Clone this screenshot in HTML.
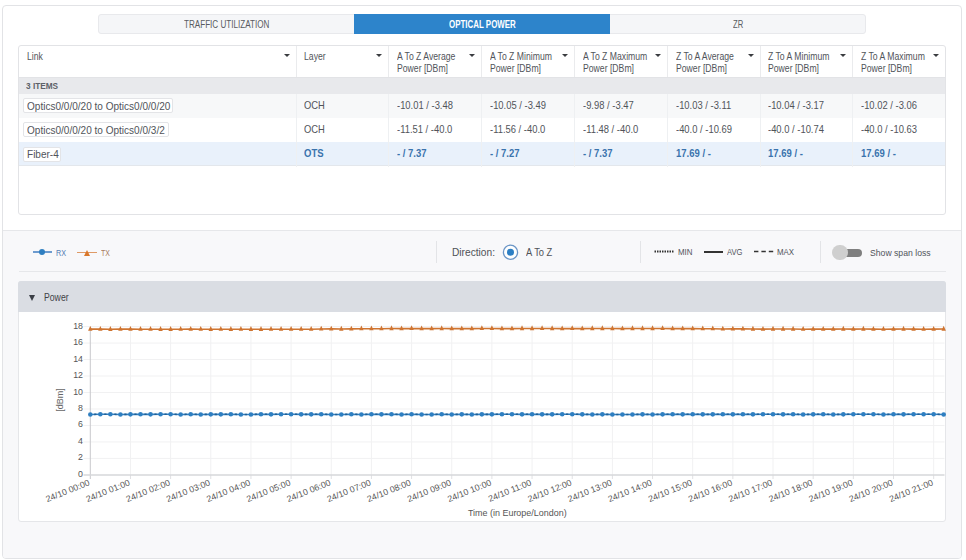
<!DOCTYPE html>
<html><head><meta charset="utf-8"><style>
*{box-sizing:border-box}
html,body{margin:0;padding:0;width:966px;height:560px;overflow:hidden;background:#fff;font-family:"Liberation Sans",sans-serif;color:#4d4f53}
.t{position:absolute;line-height:20px;white-space:nowrap;transform-origin:0 50%}
.b{position:absolute}
</style></head><body>
<div class="b" style="left:2px;top:5px;width:960px;height:554px;border:1px solid #e2e3e6;border-radius:4px;background:#fff"></div>
<div class="b" style="left:3px;top:230px;width:958px;height:328px;background:#f8f8fa;border-top:1px solid #e6e7ea;border-radius:0 0 3px 3px"></div>
<div class="b" style="left:98px;top:14px;width:768px;height:20px;background:#f5f6f8;border:1px solid #e8e9ec;border-radius:3px"></div>
<div class="b" style="left:354px;top:14px;width:255.5px;height:20px;background:#2d84cb"></div>
<div class="t" style="left:183.60px;top:15px;font-size:10px;color:#585b60;transform:scaleX(0.810);">TRAFFIC UTILIZATION</div>
<div class="t" style="left:448.70px;top:15px;font-size:10px;font-weight:bold;color:#fff;transform:scaleX(0.793);">OPTICAL POWER</div>
<div class="t" style="left:732.50px;top:15px;font-size:10px;color:#585b60;transform:scaleX(0.765);">ZR</div>
<div class="b" style="left:18px;top:45px;width:928px;height:170px;border:1px solid #e2e3e6;border-radius:3px;background:#fff"></div>
<div class="b" style="left:19px;top:77px;width:926px;height:16.5px;background:#e8e9ec"></div>
<div class="b" style="left:19px;top:93.5px;width:926px;height:24.2px;background:#f7f8f9"></div>
<div class="b" style="left:19px;top:142.1px;width:926px;height:24.4px;background:#e9f1fb"></div>
<div class="b" style="left:19px;top:165px;width:926px;height:1px;background:#e3e7ec"></div>
<div class="b" style="left:19px;top:76.5px;width:926px;height:1px;background:#e2e3e6"></div>
<div class="b" style="left:295.5px;top:46px;width:1px;height:31px;background:#eaebed"></div>
<div class="b" style="left:295.5px;top:93.5px;width:1px;height:73px;background:#eef0f2"></div>
<div class="b" style="left:388.0px;top:46px;width:1px;height:31px;background:#eaebed"></div>
<div class="b" style="left:388.0px;top:93.5px;width:1px;height:73px;background:#eef0f2"></div>
<div class="b" style="left:481.0px;top:46px;width:1px;height:31px;background:#eaebed"></div>
<div class="b" style="left:481.0px;top:93.5px;width:1px;height:73px;background:#eef0f2"></div>
<div class="b" style="left:574.0px;top:46px;width:1px;height:31px;background:#eaebed"></div>
<div class="b" style="left:574.0px;top:93.5px;width:1px;height:73px;background:#eef0f2"></div>
<div class="b" style="left:667.0px;top:46px;width:1px;height:31px;background:#eaebed"></div>
<div class="b" style="left:667.0px;top:93.5px;width:1px;height:73px;background:#eef0f2"></div>
<div class="b" style="left:759.5px;top:46px;width:1px;height:31px;background:#eaebed"></div>
<div class="b" style="left:759.5px;top:93.5px;width:1px;height:73px;background:#eef0f2"></div>
<div class="b" style="left:852.0px;top:46px;width:1px;height:31px;background:#eaebed"></div>
<div class="b" style="left:852.0px;top:93.5px;width:1px;height:73px;background:#eef0f2"></div>
<div class="t" style="left:26.70px;top:47px;font-size:10.2px;color:#51545a;transform:scaleX(0.850);">Link</div>
<div class="b" style="left:283.9px;top:54.2px;width:0;height:0;border-left:3px solid transparent;border-right:3px solid transparent;border-top:3px solid #3a3c40"></div>
<div class="t" style="left:304.20px;top:47px;font-size:10.2px;color:#51545a;transform:scaleX(0.850);">Layer</div>
<div class="b" style="left:376.4px;top:54.2px;width:0;height:0;border-left:3px solid transparent;border-right:3px solid transparent;border-top:3px solid #3a3c40"></div>
<div class="t" style="left:396.70px;top:47px;font-size:10.2px;color:#51545a;transform:scaleX(0.850);">A To Z Average</div>
<div class="t" style="left:396.70px;top:59px;font-size:10.2px;color:#51545a;transform:scaleX(0.850);">Power [DBm]</div>
<div class="b" style="left:469.4px;top:54.2px;width:0;height:0;border-left:3px solid transparent;border-right:3px solid transparent;border-top:3px solid #3a3c40"></div>
<div class="t" style="left:489.70px;top:47px;font-size:10.2px;color:#51545a;transform:scaleX(0.850);">A To Z Minimum</div>
<div class="t" style="left:489.70px;top:59px;font-size:10.2px;color:#51545a;transform:scaleX(0.850);">Power [DBm]</div>
<div class="b" style="left:562.4px;top:54.2px;width:0;height:0;border-left:3px solid transparent;border-right:3px solid transparent;border-top:3px solid #3a3c40"></div>
<div class="t" style="left:582.70px;top:47px;font-size:10.2px;color:#51545a;transform:scaleX(0.850);">A To Z Maximum</div>
<div class="t" style="left:582.70px;top:59px;font-size:10.2px;color:#51545a;transform:scaleX(0.850);">Power [DBm]</div>
<div class="b" style="left:655.4px;top:54.2px;width:0;height:0;border-left:3px solid transparent;border-right:3px solid transparent;border-top:3px solid #3a3c40"></div>
<div class="t" style="left:675.70px;top:47px;font-size:10.2px;color:#51545a;transform:scaleX(0.850);">Z To A Average</div>
<div class="t" style="left:675.70px;top:59px;font-size:10.2px;color:#51545a;transform:scaleX(0.850);">Power [DBm]</div>
<div class="b" style="left:747.9px;top:54.2px;width:0;height:0;border-left:3px solid transparent;border-right:3px solid transparent;border-top:3px solid #3a3c40"></div>
<div class="t" style="left:768.20px;top:47px;font-size:10.2px;color:#51545a;transform:scaleX(0.850);">Z To A Minimum</div>
<div class="t" style="left:768.20px;top:59px;font-size:10.2px;color:#51545a;transform:scaleX(0.850);">Power [DBm]</div>
<div class="b" style="left:840.4px;top:54.2px;width:0;height:0;border-left:3px solid transparent;border-right:3px solid transparent;border-top:3px solid #3a3c40"></div>
<div class="t" style="left:860.70px;top:47px;font-size:10.2px;color:#51545a;transform:scaleX(0.850);">Z To A Maximum</div>
<div class="t" style="left:860.70px;top:59px;font-size:10.2px;color:#51545a;transform:scaleX(0.850);">Power [DBm]</div>
<div class="b" style="left:933.4px;top:54.2px;width:0;height:0;border-left:3px solid transparent;border-right:3px solid transparent;border-top:3px solid #3a3c40"></div>
<div class="t" style="left:26.10px;top:76px;font-size:8.6px;font-weight:bold;color:#5d6168;transform:scaleX(0.960);">3 ITEMS</div>
<div class="b" style="left:23.4px;top:98.1px;width:150px;height:15.2px;border:1px solid #e3e4e7;border-radius:2px;background:#fff"></div>
<div class="t" style="left:26.70px;top:97px;font-size:10.4px;color:#51545a;transform:scaleX(0.966);">Optics0/0/0/20 to Optics0/0/0/20</div>
<div class="t" style="left:304.40px;top:96px;font-size:10.2px;color:#51545a;transform:scaleX(0.923);">OCH</div>
<div class="t" style="left:396.90px;top:96px;font-size:10.2px;color:#51545a;transform:scaleX(0.923);">-10.01 / -3.48</div>
<div class="t" style="left:489.90px;top:96px;font-size:10.2px;color:#51545a;transform:scaleX(0.923);">-10.05 / -3.49</div>
<div class="t" style="left:582.90px;top:96px;font-size:10.2px;color:#51545a;transform:scaleX(0.923);">-9.98 / -3.47</div>
<div class="t" style="left:675.90px;top:96px;font-size:10.2px;color:#51545a;transform:scaleX(0.923);">-10.03 / -3.11</div>
<div class="t" style="left:768.40px;top:96px;font-size:10.2px;color:#51545a;transform:scaleX(0.923);">-10.04 / -3.17</div>
<div class="t" style="left:860.90px;top:96px;font-size:10.2px;color:#51545a;transform:scaleX(0.923);">-10.02 / -3.06</div>
<div class="b" style="left:23.4px;top:122.3px;width:145.2px;height:15.2px;border:1px solid #e3e4e7;border-radius:2px;background:#fff"></div>
<div class="t" style="left:26.70px;top:121px;font-size:10.4px;color:#51545a;transform:scaleX(0.966);">Optics0/0/0/20 to Optics0/0/3/2</div>
<div class="t" style="left:304.40px;top:120px;font-size:10.2px;color:#51545a;transform:scaleX(0.923);">OCH</div>
<div class="t" style="left:396.90px;top:120px;font-size:10.2px;color:#51545a;transform:scaleX(0.923);">-11.51 / -40.0</div>
<div class="t" style="left:489.90px;top:120px;font-size:10.2px;color:#51545a;transform:scaleX(0.923);">-11.56 / -40.0</div>
<div class="t" style="left:582.90px;top:120px;font-size:10.2px;color:#51545a;transform:scaleX(0.923);">-11.48 / -40.0</div>
<div class="t" style="left:675.90px;top:120px;font-size:10.2px;color:#51545a;transform:scaleX(0.923);">-40.0 / -10.69</div>
<div class="t" style="left:768.40px;top:120px;font-size:10.2px;color:#51545a;transform:scaleX(0.923);">-40.0 / -10.74</div>
<div class="t" style="left:860.90px;top:120px;font-size:10.2px;color:#51545a;transform:scaleX(0.923);">-40.0 / -10.63</div>
<div class="b" style="left:23.4px;top:146.7px;width:37.7px;height:15.2px;border:1px solid #e3e4e7;border-radius:2px;background:#fff"></div>
<div class="t" style="left:26.70px;top:145px;font-size:10.4px;color:#51545a;transform:scaleX(0.966);">Fiber-4</div>
<div class="t" style="left:304.40px;top:144px;font-size:10px;font-weight:bold;color:#3a73ad;transform:scaleX(0.950);">OTS</div>
<div class="t" style="left:396.90px;top:144px;font-size:10px;font-weight:bold;color:#3a73ad;transform:scaleX(0.950);">- / 7.37</div>
<div class="t" style="left:489.90px;top:144px;font-size:10px;font-weight:bold;color:#3a73ad;transform:scaleX(0.950);">- / 7.27</div>
<div class="t" style="left:582.90px;top:144px;font-size:10px;font-weight:bold;color:#3a73ad;transform:scaleX(0.950);">- / 7.37</div>
<div class="t" style="left:675.90px;top:144px;font-size:10px;font-weight:bold;color:#3a73ad;transform:scaleX(0.950);">17.69 / -</div>
<div class="t" style="left:768.40px;top:144px;font-size:10px;font-weight:bold;color:#3a73ad;transform:scaleX(0.950);">17.69 / -</div>
<div class="t" style="left:860.90px;top:144px;font-size:10px;font-weight:bold;color:#3a73ad;transform:scaleX(0.950);">17.69 / -</div>
<div class="b" style="left:18.5px;top:271px;width:927px;height:1px;background:#e6e7ea"></div>
<div class="b" style="left:33px;top:251px;width:19px;height:2px;background:#6d9bcf"></div>
<div class="b" style="left:39.2px;top:249px;width:6.2px;height:6.2px;border-radius:50%;background:#2f7fc1"></div>
<div class="t" style="left:56.20px;top:243px;font-size:9px;color:#5580b5;transform:scaleX(0.808);">RX</div>
<div class="b" style="left:77px;top:251.5px;width:19.5px;height:1.5px;background:#df9a66"></div>
<div class="b" style="left:84px;top:249.5px;width:0;height:0;border-left:3.2px solid transparent;border-right:3.2px solid transparent;border-bottom:6px solid #d9772b"></div>
<div class="t" style="left:101.00px;top:243px;font-size:9px;color:#a87c60;transform:scaleX(0.774);">TX</div>
<div class="b" style="left:436px;top:241px;width:1px;height:22px;background:#e3e4e7"></div>
<div class="b" style="left:639.5px;top:241px;width:1px;height:22px;background:#e3e4e7"></div>
<div class="b" style="left:819.5px;top:241px;width:1px;height:22px;background:#e3e4e7"></div>
<div class="t" style="left:452.00px;top:242px;font-size:10.8px;color:#4f5257;transform:scaleX(0.943);">Direction:</div>
<svg class="b" style="left:500px;top:242px" width="22" height="22"><circle cx="10.5" cy="10.2" r="7.1" fill="#fff" stroke="#6b95c6" stroke-width="1.3"/><circle cx="10.5" cy="10.2" r="3.5" fill="#2d7fc4"/></svg>
<div class="t" style="left:525.60px;top:242px;font-size:10.5px;color:#4f5257;transform:scaleX(0.889);">A To Z</div>
<svg class="b" style="left:654px;top:250px" width="20" height="3"><line x1="0.5" x2="19.5" y1="1.5" y2="1.5" stroke="#333" stroke-width="1.8" stroke-dasharray="1.5 1"/></svg>
<div class="t" style="left:678.00px;top:242px;font-size:9px;color:#51545a;transform:scaleX(0.879);">MIN</div>
<div class="b" style="left:704px;top:251px;width:19px;height:2px;background:#333"></div>
<div class="t" style="left:726.70px;top:242px;font-size:9px;color:#51545a;transform:scaleX(0.845);">AVG</div>
<svg class="b" style="left:753.8px;top:250px" width="20" height="3"><line x1="0" x2="19.2" y1="1.5" y2="1.5" stroke="#333" stroke-width="1.6" stroke-dasharray="4.4 3"/></svg>
<div class="t" style="left:776.60px;top:242px;font-size:9px;color:#51545a;transform:scaleX(0.872);">MAX</div>
<div class="b" style="left:841px;top:248.6px;width:21px;height:8.2px;border-radius:4px;background:#7f7f7f"></div>
<div class="b" style="left:832.3px;top:245px;width:15.3px;height:15.3px;border-radius:50%;background:#cfcfcf"></div>
<div class="t" style="left:869.80px;top:243px;font-size:9.8px;color:#51545a;transform:scaleX(0.883);">Show span loss</div>
<div class="b" style="left:18px;top:281px;width:928px;height:241px;border:1px solid #e5e6e9;border-radius:3px;background:#fff"></div>
<div class="b" style="left:18px;top:281px;width:928px;height:31px;background:#dadde3;border-radius:3px 3px 0 0"></div>
<div class="b" style="left:29px;top:294.5px;width:0;height:0;border-left:3.8px solid transparent;border-right:3.8px solid transparent;border-top:6px solid #3a3e46"></div>
<div class="t" style="left:43.80px;top:288px;font-size:10px;color:#3f4247;transform:scaleX(0.868);">Power</div>
<svg class="b" style="left:0;top:0" width="966" height="560"><line x1="83.5" x2="944.5" y1="458.42" y2="458.42" stroke="#f1f1f2" stroke-width="1"/><line x1="83.5" x2="944.5" y1="441.94" y2="441.94" stroke="#f1f1f2" stroke-width="1"/><line x1="83.5" x2="944.5" y1="425.46" y2="425.46" stroke="#f1f1f2" stroke-width="1"/><line x1="83.5" x2="944.5" y1="408.98" y2="408.98" stroke="#f1f1f2" stroke-width="1"/><line x1="83.5" x2="944.5" y1="392.50" y2="392.50" stroke="#f1f1f2" stroke-width="1"/><line x1="83.5" x2="944.5" y1="376.02" y2="376.02" stroke="#f1f1f2" stroke-width="1"/><line x1="83.5" x2="944.5" y1="359.54" y2="359.54" stroke="#f1f1f2" stroke-width="1"/><line x1="83.5" x2="944.5" y1="343.06" y2="343.06" stroke="#f1f1f2" stroke-width="1"/><line x1="83.5" x2="944.5" y1="326.58" y2="326.58" stroke="#f1f1f2" stroke-width="1"/><line x1="130.46" x2="130.46" y1="326.58" y2="474.90" stroke="#f1f1f2" stroke-width="1"/><line x1="170.62" x2="170.62" y1="326.58" y2="474.90" stroke="#f1f1f2" stroke-width="1"/><line x1="210.78" x2="210.78" y1="326.58" y2="474.90" stroke="#f1f1f2" stroke-width="1"/><line x1="250.94" x2="250.94" y1="326.58" y2="474.90" stroke="#f1f1f2" stroke-width="1"/><line x1="291.10" x2="291.10" y1="326.58" y2="474.90" stroke="#f1f1f2" stroke-width="1"/><line x1="331.26" x2="331.26" y1="326.58" y2="474.90" stroke="#f1f1f2" stroke-width="1"/><line x1="371.42" x2="371.42" y1="326.58" y2="474.90" stroke="#f1f1f2" stroke-width="1"/><line x1="411.58" x2="411.58" y1="326.58" y2="474.90" stroke="#f1f1f2" stroke-width="1"/><line x1="451.74" x2="451.74" y1="326.58" y2="474.90" stroke="#f1f1f2" stroke-width="1"/><line x1="491.90" x2="491.90" y1="326.58" y2="474.90" stroke="#f1f1f2" stroke-width="1"/><line x1="532.06" x2="532.06" y1="326.58" y2="474.90" stroke="#f1f1f2" stroke-width="1"/><line x1="572.22" x2="572.22" y1="326.58" y2="474.90" stroke="#f1f1f2" stroke-width="1"/><line x1="612.38" x2="612.38" y1="326.58" y2="474.90" stroke="#f1f1f2" stroke-width="1"/><line x1="652.54" x2="652.54" y1="326.58" y2="474.90" stroke="#f1f1f2" stroke-width="1"/><line x1="692.70" x2="692.70" y1="326.58" y2="474.90" stroke="#f1f1f2" stroke-width="1"/><line x1="732.86" x2="732.86" y1="326.58" y2="474.90" stroke="#f1f1f2" stroke-width="1"/><line x1="773.02" x2="773.02" y1="326.58" y2="474.90" stroke="#f1f1f2" stroke-width="1"/><line x1="813.18" x2="813.18" y1="326.58" y2="474.90" stroke="#f1f1f2" stroke-width="1"/><line x1="853.34" x2="853.34" y1="326.58" y2="474.90" stroke="#f1f1f2" stroke-width="1"/><line x1="893.50" x2="893.50" y1="326.58" y2="474.90" stroke="#f1f1f2" stroke-width="1"/><line x1="933.66" x2="933.66" y1="326.58" y2="474.90" stroke="#f1f1f2" stroke-width="1"/><line x1="90.30" x2="90.30" y1="326.58" y2="479" stroke="#c8c8cc" stroke-width="1"/><line x1="130.46" x2="130.46" y1="474.90" y2="479" stroke="#e0e0e3" stroke-width="1"/><line x1="170.62" x2="170.62" y1="474.90" y2="479" stroke="#e0e0e3" stroke-width="1"/><line x1="210.78" x2="210.78" y1="474.90" y2="479" stroke="#e0e0e3" stroke-width="1"/><line x1="250.94" x2="250.94" y1="474.90" y2="479" stroke="#e0e0e3" stroke-width="1"/><line x1="291.10" x2="291.10" y1="474.90" y2="479" stroke="#e0e0e3" stroke-width="1"/><line x1="331.26" x2="331.26" y1="474.90" y2="479" stroke="#e0e0e3" stroke-width="1"/><line x1="371.42" x2="371.42" y1="474.90" y2="479" stroke="#e0e0e3" stroke-width="1"/><line x1="411.58" x2="411.58" y1="474.90" y2="479" stroke="#e0e0e3" stroke-width="1"/><line x1="451.74" x2="451.74" y1="474.90" y2="479" stroke="#e0e0e3" stroke-width="1"/><line x1="491.90" x2="491.90" y1="474.90" y2="479" stroke="#e0e0e3" stroke-width="1"/><line x1="532.06" x2="532.06" y1="474.90" y2="479" stroke="#e0e0e3" stroke-width="1"/><line x1="572.22" x2="572.22" y1="474.90" y2="479" stroke="#e0e0e3" stroke-width="1"/><line x1="612.38" x2="612.38" y1="474.90" y2="479" stroke="#e0e0e3" stroke-width="1"/><line x1="652.54" x2="652.54" y1="474.90" y2="479" stroke="#e0e0e3" stroke-width="1"/><line x1="692.70" x2="692.70" y1="474.90" y2="479" stroke="#e0e0e3" stroke-width="1"/><line x1="732.86" x2="732.86" y1="474.90" y2="479" stroke="#e0e0e3" stroke-width="1"/><line x1="773.02" x2="773.02" y1="474.90" y2="479" stroke="#e0e0e3" stroke-width="1"/><line x1="813.18" x2="813.18" y1="474.90" y2="479" stroke="#e0e0e3" stroke-width="1"/><line x1="853.34" x2="853.34" y1="474.90" y2="479" stroke="#e0e0e3" stroke-width="1"/><line x1="893.50" x2="893.50" y1="474.90" y2="479" stroke="#e0e0e3" stroke-width="1"/><line x1="933.66" x2="933.66" y1="474.90" y2="479" stroke="#e0e0e3" stroke-width="1"/><line x1="83.5" x2="944.5" y1="474.90" y2="474.90" stroke="#d6d7da" stroke-width="1.5"/><text x="83" y="476.90" text-anchor="end" font-family="Liberation Sans" font-size="8.8" fill="#555">0</text><text x="83" y="460.42" text-anchor="end" font-family="Liberation Sans" font-size="8.8" fill="#555">2</text><text x="83" y="443.94" text-anchor="end" font-family="Liberation Sans" font-size="8.8" fill="#555">4</text><text x="83" y="427.46" text-anchor="end" font-family="Liberation Sans" font-size="8.8" fill="#555">6</text><text x="83" y="410.98" text-anchor="end" font-family="Liberation Sans" font-size="8.8" fill="#555">8</text><text x="83" y="394.50" text-anchor="end" font-family="Liberation Sans" font-size="8.8" fill="#555">10</text><text x="83" y="378.02" text-anchor="end" font-family="Liberation Sans" font-size="8.8" fill="#555">12</text><text x="83" y="361.54" text-anchor="end" font-family="Liberation Sans" font-size="8.8" fill="#555">14</text><text x="83" y="345.06" text-anchor="end" font-family="Liberation Sans" font-size="8.8" fill="#555">16</text><text x="83" y="328.58" text-anchor="end" font-family="Liberation Sans" font-size="8.8" fill="#555">18</text><text x="90.40" y="484.80" text-anchor="end" transform="rotate(-22 90.40 484.80)" font-family="Liberation Sans" font-size="8.8" fill="#555">24/10 00:00</text><text x="130.56" y="484.80" text-anchor="end" transform="rotate(-22 130.56 484.80)" font-family="Liberation Sans" font-size="8.8" fill="#555">24/10 01:00</text><text x="170.72" y="484.80" text-anchor="end" transform="rotate(-22 170.72 484.80)" font-family="Liberation Sans" font-size="8.8" fill="#555">24/10 02:00</text><text x="210.88" y="484.80" text-anchor="end" transform="rotate(-22 210.88 484.80)" font-family="Liberation Sans" font-size="8.8" fill="#555">24/10 03:00</text><text x="251.04" y="484.80" text-anchor="end" transform="rotate(-22 251.04 484.80)" font-family="Liberation Sans" font-size="8.8" fill="#555">24/10 04:00</text><text x="291.20" y="484.80" text-anchor="end" transform="rotate(-22 291.20 484.80)" font-family="Liberation Sans" font-size="8.8" fill="#555">24/10 05:00</text><text x="331.36" y="484.80" text-anchor="end" transform="rotate(-22 331.36 484.80)" font-family="Liberation Sans" font-size="8.8" fill="#555">24/10 06:00</text><text x="371.52" y="484.80" text-anchor="end" transform="rotate(-22 371.52 484.80)" font-family="Liberation Sans" font-size="8.8" fill="#555">24/10 07:00</text><text x="411.68" y="484.80" text-anchor="end" transform="rotate(-22 411.68 484.80)" font-family="Liberation Sans" font-size="8.8" fill="#555">24/10 08:00</text><text x="451.84" y="484.80" text-anchor="end" transform="rotate(-22 451.84 484.80)" font-family="Liberation Sans" font-size="8.8" fill="#555">24/10 09:00</text><text x="492.00" y="484.80" text-anchor="end" transform="rotate(-22 492.00 484.80)" font-family="Liberation Sans" font-size="8.8" fill="#555">24/10 10:00</text><text x="532.16" y="484.80" text-anchor="end" transform="rotate(-22 532.16 484.80)" font-family="Liberation Sans" font-size="8.8" fill="#555">24/10 11:00</text><text x="572.32" y="484.80" text-anchor="end" transform="rotate(-22 572.32 484.80)" font-family="Liberation Sans" font-size="8.8" fill="#555">24/10 12:00</text><text x="612.48" y="484.80" text-anchor="end" transform="rotate(-22 612.48 484.80)" font-family="Liberation Sans" font-size="8.8" fill="#555">24/10 13:00</text><text x="652.64" y="484.80" text-anchor="end" transform="rotate(-22 652.64 484.80)" font-family="Liberation Sans" font-size="8.8" fill="#555">24/10 14:00</text><text x="692.80" y="484.80" text-anchor="end" transform="rotate(-22 692.80 484.80)" font-family="Liberation Sans" font-size="8.8" fill="#555">24/10 15:00</text><text x="732.96" y="484.80" text-anchor="end" transform="rotate(-22 732.96 484.80)" font-family="Liberation Sans" font-size="8.8" fill="#555">24/10 16:00</text><text x="773.12" y="484.80" text-anchor="end" transform="rotate(-22 773.12 484.80)" font-family="Liberation Sans" font-size="8.8" fill="#555">24/10 17:00</text><text x="813.28" y="484.80" text-anchor="end" transform="rotate(-22 813.28 484.80)" font-family="Liberation Sans" font-size="8.8" fill="#555">24/10 18:00</text><text x="853.44" y="484.80" text-anchor="end" transform="rotate(-22 853.44 484.80)" font-family="Liberation Sans" font-size="8.8" fill="#555">24/10 19:00</text><text x="893.60" y="484.80" text-anchor="end" transform="rotate(-22 893.60 484.80)" font-family="Liberation Sans" font-size="8.8" fill="#555">24/10 20:00</text><text x="933.76" y="484.80" text-anchor="end" transform="rotate(-22 933.76 484.80)" font-family="Liberation Sans" font-size="8.8" fill="#555">24/10 21:00</text><text x="0" y="0" text-anchor="middle" transform="translate(62.6 400) rotate(-90)" font-family="Liberation Sans" font-size="9" fill="#666">[dBm]</text><text x="517.3" y="515.8" text-anchor="middle" font-family="Liberation Sans" font-size="8.96" fill="#555">Time (in Europe/London)</text><polyline points="90.30,329.12 100.34,329.12 110.38,329.32 120.42,329.12 130.46,329.12 140.50,329.22 150.54,329.22 160.58,329.32 170.62,329.32 180.66,329.22 190.70,329.12 200.74,329.22 210.78,329.32 220.82,329.22 230.86,329.32 240.90,329.22 250.94,329.32 260.98,329.32 271.02,329.22 281.06,329.22 291.10,329.22 301.14,329.26 311.18,329.21 321.22,328.95 331.26,328.90 341.30,329.04 351.34,328.89 361.38,328.73 371.42,328.68 381.46,328.72 391.50,328.57 401.54,328.61 411.58,328.46 421.62,328.66 431.66,328.66 441.70,328.56 451.74,328.66 461.78,328.66 471.82,328.66 481.86,328.46 491.90,328.46 501.94,328.66 511.98,328.66 522.02,328.56 532.06,328.56 542.10,328.46 552.14,328.56 562.18,328.66 572.22,328.46 582.26,328.66 592.30,328.56 602.34,328.56 612.38,328.56 622.42,328.66 632.46,328.56 642.50,328.56 652.54,328.56 662.58,328.51 672.62,328.65 682.66,328.60 692.70,328.65 702.74,328.70 712.78,328.75 722.82,328.99 732.86,328.84 742.90,328.89 752.94,329.04 762.98,329.09 773.02,329.04 783.06,329.04 793.10,329.04 803.14,329.23 813.18,329.13 823.22,329.13 833.26,329.13 843.30,329.04 853.34,329.13 863.38,329.04 873.42,329.13 883.46,329.23 893.50,329.13 903.54,329.04 913.58,329.13 923.62,329.23 933.66,329.13 943.70,329.04" fill="none" stroke="#cf7430" stroke-width="1.6"/><path d="M90.30 325.92L92.50 330.72L88.10 330.72Z" fill="#cf7430"/><path d="M100.34 325.92L102.54 330.72L98.14 330.72Z" fill="#cf7430"/><path d="M110.38 326.12L112.58 330.92L108.18 330.92Z" fill="#cf7430"/><path d="M120.42 325.92L122.62 330.72L118.22 330.72Z" fill="#cf7430"/><path d="M130.46 325.92L132.66 330.72L128.26 330.72Z" fill="#cf7430"/><path d="M140.50 326.02L142.70 330.82L138.30 330.82Z" fill="#cf7430"/><path d="M150.54 326.02L152.74 330.82L148.34 330.82Z" fill="#cf7430"/><path d="M160.58 326.12L162.78 330.92L158.38 330.92Z" fill="#cf7430"/><path d="M170.62 326.12L172.82 330.92L168.42 330.92Z" fill="#cf7430"/><path d="M180.66 326.02L182.86 330.82L178.46 330.82Z" fill="#cf7430"/><path d="M190.70 325.92L192.90 330.72L188.50 330.72Z" fill="#cf7430"/><path d="M200.74 326.02L202.94 330.82L198.54 330.82Z" fill="#cf7430"/><path d="M210.78 326.12L212.98 330.92L208.58 330.92Z" fill="#cf7430"/><path d="M220.82 326.02L223.02 330.82L218.62 330.82Z" fill="#cf7430"/><path d="M230.86 326.12L233.06 330.92L228.66 330.92Z" fill="#cf7430"/><path d="M240.90 326.02L243.10 330.82L238.70 330.82Z" fill="#cf7430"/><path d="M250.94 326.12L253.14 330.92L248.74 330.92Z" fill="#cf7430"/><path d="M260.98 326.12L263.18 330.92L258.78 330.92Z" fill="#cf7430"/><path d="M271.02 326.02L273.22 330.82L268.82 330.82Z" fill="#cf7430"/><path d="M281.06 326.02L283.26 330.82L278.86 330.82Z" fill="#cf7430"/><path d="M291.10 326.02L293.30 330.82L288.90 330.82Z" fill="#cf7430"/><path d="M301.14 326.06L303.34 330.86L298.94 330.86Z" fill="#cf7430"/><path d="M311.18 326.01L313.38 330.81L308.98 330.81Z" fill="#cf7430"/><path d="M321.22 325.75L323.42 330.55L319.02 330.55Z" fill="#cf7430"/><path d="M331.26 325.70L333.46 330.50L329.06 330.50Z" fill="#cf7430"/><path d="M341.30 325.84L343.50 330.64L339.10 330.64Z" fill="#cf7430"/><path d="M351.34 325.69L353.54 330.49L349.14 330.49Z" fill="#cf7430"/><path d="M361.38 325.53L363.58 330.33L359.18 330.33Z" fill="#cf7430"/><path d="M371.42 325.48L373.62 330.28L369.22 330.28Z" fill="#cf7430"/><path d="M381.46 325.52L383.66 330.32L379.26 330.32Z" fill="#cf7430"/><path d="M391.50 325.37L393.70 330.17L389.30 330.17Z" fill="#cf7430"/><path d="M401.54 325.41L403.74 330.21L399.34 330.21Z" fill="#cf7430"/><path d="M411.58 325.26L413.78 330.06L409.38 330.06Z" fill="#cf7430"/><path d="M421.62 325.46L423.82 330.26L419.42 330.26Z" fill="#cf7430"/><path d="M431.66 325.46L433.86 330.26L429.46 330.26Z" fill="#cf7430"/><path d="M441.70 325.36L443.90 330.16L439.50 330.16Z" fill="#cf7430"/><path d="M451.74 325.46L453.94 330.26L449.54 330.26Z" fill="#cf7430"/><path d="M461.78 325.46L463.98 330.26L459.58 330.26Z" fill="#cf7430"/><path d="M471.82 325.46L474.02 330.26L469.62 330.26Z" fill="#cf7430"/><path d="M481.86 325.26L484.06 330.06L479.66 330.06Z" fill="#cf7430"/><path d="M491.90 325.26L494.10 330.06L489.70 330.06Z" fill="#cf7430"/><path d="M501.94 325.46L504.14 330.26L499.74 330.26Z" fill="#cf7430"/><path d="M511.98 325.46L514.18 330.26L509.78 330.26Z" fill="#cf7430"/><path d="M522.02 325.36L524.22 330.16L519.82 330.16Z" fill="#cf7430"/><path d="M532.06 325.36L534.26 330.16L529.86 330.16Z" fill="#cf7430"/><path d="M542.10 325.26L544.30 330.06L539.90 330.06Z" fill="#cf7430"/><path d="M552.14 325.36L554.34 330.16L549.94 330.16Z" fill="#cf7430"/><path d="M562.18 325.46L564.38 330.26L559.98 330.26Z" fill="#cf7430"/><path d="M572.22 325.26L574.42 330.06L570.02 330.06Z" fill="#cf7430"/><path d="M582.26 325.46L584.46 330.26L580.06 330.26Z" fill="#cf7430"/><path d="M592.30 325.36L594.50 330.16L590.10 330.16Z" fill="#cf7430"/><path d="M602.34 325.36L604.54 330.16L600.14 330.16Z" fill="#cf7430"/><path d="M612.38 325.36L614.58 330.16L610.18 330.16Z" fill="#cf7430"/><path d="M622.42 325.46L624.62 330.26L620.22 330.26Z" fill="#cf7430"/><path d="M632.46 325.36L634.66 330.16L630.26 330.16Z" fill="#cf7430"/><path d="M642.50 325.36L644.70 330.16L640.30 330.16Z" fill="#cf7430"/><path d="M652.54 325.36L654.74 330.16L650.34 330.16Z" fill="#cf7430"/><path d="M662.58 325.31L664.78 330.11L660.38 330.11Z" fill="#cf7430"/><path d="M672.62 325.45L674.82 330.25L670.42 330.25Z" fill="#cf7430"/><path d="M682.66 325.40L684.86 330.20L680.46 330.20Z" fill="#cf7430"/><path d="M692.70 325.45L694.90 330.25L690.50 330.25Z" fill="#cf7430"/><path d="M702.74 325.50L704.94 330.30L700.54 330.30Z" fill="#cf7430"/><path d="M712.78 325.55L714.98 330.35L710.58 330.35Z" fill="#cf7430"/><path d="M722.82 325.79L725.02 330.59L720.62 330.59Z" fill="#cf7430"/><path d="M732.86 325.64L735.06 330.44L730.66 330.44Z" fill="#cf7430"/><path d="M742.90 325.69L745.10 330.49L740.70 330.49Z" fill="#cf7430"/><path d="M752.94 325.84L755.14 330.64L750.74 330.64Z" fill="#cf7430"/><path d="M762.98 325.89L765.18 330.69L760.78 330.69Z" fill="#cf7430"/><path d="M773.02 325.84L775.22 330.64L770.82 330.64Z" fill="#cf7430"/><path d="M783.06 325.84L785.26 330.64L780.86 330.64Z" fill="#cf7430"/><path d="M793.10 325.84L795.30 330.64L790.90 330.64Z" fill="#cf7430"/><path d="M803.14 326.03L805.34 330.83L800.94 330.83Z" fill="#cf7430"/><path d="M813.18 325.93L815.38 330.73L810.98 330.73Z" fill="#cf7430"/><path d="M823.22 325.93L825.42 330.73L821.02 330.73Z" fill="#cf7430"/><path d="M833.26 325.93L835.46 330.73L831.06 330.73Z" fill="#cf7430"/><path d="M843.30 325.84L845.50 330.64L841.10 330.64Z" fill="#cf7430"/><path d="M853.34 325.93L855.54 330.73L851.14 330.73Z" fill="#cf7430"/><path d="M863.38 325.84L865.58 330.64L861.18 330.64Z" fill="#cf7430"/><path d="M873.42 325.93L875.62 330.73L871.22 330.73Z" fill="#cf7430"/><path d="M883.46 326.03L885.66 330.83L881.26 330.83Z" fill="#cf7430"/><path d="M893.50 325.93L895.70 330.73L891.30 330.73Z" fill="#cf7430"/><path d="M903.54 325.84L905.74 330.64L901.34 330.64Z" fill="#cf7430"/><path d="M913.58 325.93L915.78 330.73L911.38 330.73Z" fill="#cf7430"/><path d="M923.62 326.03L925.82 330.83L921.42 330.83Z" fill="#cf7430"/><path d="M933.66 325.93L935.86 330.73L931.46 330.73Z" fill="#cf7430"/><path d="M943.70 325.84L945.90 330.64L941.50 330.64Z" fill="#cf7430"/><polyline points="90.30,414.46 100.34,414.21 110.38,414.21 120.42,414.46 130.46,414.34 140.50,414.21 150.54,414.34 160.58,414.21 170.62,414.21 180.66,414.46 190.70,414.21 200.74,414.46 210.78,414.34 220.82,414.34 230.86,414.21 240.90,414.46 250.94,414.46 260.98,414.21 271.02,414.34 281.06,414.21 291.10,414.21 301.14,414.34 311.18,414.34 321.22,414.21 331.26,414.46 341.30,414.46 351.34,414.21 361.38,414.46 371.42,414.21 381.46,414.34 391.50,414.21 401.54,414.46 411.58,414.21 421.62,414.46 431.66,414.46 441.70,414.21 451.74,414.46 461.78,414.34 471.82,414.46 481.86,414.34 491.90,414.34 501.94,414.21 511.98,414.21 522.02,414.34 532.06,414.21 542.10,414.34 552.14,414.34 562.18,414.21 572.22,414.21 582.26,414.34 592.30,414.46 602.34,414.34 612.38,414.46 622.42,414.46 632.46,414.46 642.50,414.34 652.54,414.46 662.58,414.34 672.62,414.21 682.66,414.34 692.70,414.21 702.74,414.34 712.78,414.34 722.82,414.21 732.86,414.34 742.90,414.21 752.94,414.34 762.98,414.21 773.02,414.21 783.06,414.34 793.10,414.21 803.14,414.46 813.18,414.34 823.22,414.21 833.26,414.46 843.30,414.34 853.34,414.21 863.38,414.21 873.42,414.21 883.46,414.46 893.50,414.21 903.54,414.34 913.58,414.21 923.62,414.21 933.66,414.21 943.70,414.46" fill="none" stroke="#2f7fc1" stroke-width="1.6"/><polyline points="90.30,414.46 100.34,414.21 110.38,414.21 120.42,414.46 130.46,414.34 140.50,414.21 150.54,414.34 160.58,414.21 170.62,414.21 180.66,414.46 190.70,414.21 200.74,414.46 210.78,414.34 220.82,414.34 230.86,414.21 240.90,414.46 250.94,414.46 260.98,414.21 271.02,414.34 281.06,414.21 291.10,414.21 301.14,414.34 311.18,414.34 321.22,414.21 331.26,414.46 341.30,414.46 351.34,414.21 361.38,414.46 371.42,414.21 381.46,414.34 391.50,414.21 401.54,414.46 411.58,414.21 421.62,414.46 431.66,414.46 441.70,414.21 451.74,414.46 461.78,414.34 471.82,414.46 481.86,414.34 491.90,414.34 501.94,414.21 511.98,414.21 522.02,414.34 532.06,414.21 542.10,414.34 552.14,414.34 562.18,414.21 572.22,414.21 582.26,414.34 592.30,414.46 602.34,414.34 612.38,414.46 622.42,414.46 632.46,414.46 642.50,414.34 652.54,414.46 662.58,414.34 672.62,414.21 682.66,414.34 692.70,414.21 702.74,414.34 712.78,414.34 722.82,414.21 732.86,414.34 742.90,414.21 752.94,414.34 762.98,414.21 773.02,414.21 783.06,414.34 793.10,414.21 803.14,414.46 813.18,414.34 823.22,414.21 833.26,414.46 843.30,414.34 853.34,414.21 863.38,414.21 873.42,414.21 883.46,414.46 893.50,414.21 903.54,414.34 913.58,414.21 923.62,414.21 933.66,414.21 943.70,414.46" fill="none" stroke="#235f93" stroke-width="1.6" stroke-dasharray="2.2 7.84" stroke-dashoffset="-3.92"/><circle cx="90.30" cy="414.46" r="2.3" fill="#2f7fc1"/><circle cx="100.34" cy="414.21" r="2.3" fill="#2f7fc1"/><circle cx="110.38" cy="414.21" r="2.3" fill="#2f7fc1"/><circle cx="120.42" cy="414.46" r="2.3" fill="#2f7fc1"/><circle cx="130.46" cy="414.34" r="2.3" fill="#2f7fc1"/><circle cx="140.50" cy="414.21" r="2.3" fill="#2f7fc1"/><circle cx="150.54" cy="414.34" r="2.3" fill="#2f7fc1"/><circle cx="160.58" cy="414.21" r="2.3" fill="#2f7fc1"/><circle cx="170.62" cy="414.21" r="2.3" fill="#2f7fc1"/><circle cx="180.66" cy="414.46" r="2.3" fill="#2f7fc1"/><circle cx="190.70" cy="414.21" r="2.3" fill="#2f7fc1"/><circle cx="200.74" cy="414.46" r="2.3" fill="#2f7fc1"/><circle cx="210.78" cy="414.34" r="2.3" fill="#2f7fc1"/><circle cx="220.82" cy="414.34" r="2.3" fill="#2f7fc1"/><circle cx="230.86" cy="414.21" r="2.3" fill="#2f7fc1"/><circle cx="240.90" cy="414.46" r="2.3" fill="#2f7fc1"/><circle cx="250.94" cy="414.46" r="2.3" fill="#2f7fc1"/><circle cx="260.98" cy="414.21" r="2.3" fill="#2f7fc1"/><circle cx="271.02" cy="414.34" r="2.3" fill="#2f7fc1"/><circle cx="281.06" cy="414.21" r="2.3" fill="#2f7fc1"/><circle cx="291.10" cy="414.21" r="2.3" fill="#2f7fc1"/><circle cx="301.14" cy="414.34" r="2.3" fill="#2f7fc1"/><circle cx="311.18" cy="414.34" r="2.3" fill="#2f7fc1"/><circle cx="321.22" cy="414.21" r="2.3" fill="#2f7fc1"/><circle cx="331.26" cy="414.46" r="2.3" fill="#2f7fc1"/><circle cx="341.30" cy="414.46" r="2.3" fill="#2f7fc1"/><circle cx="351.34" cy="414.21" r="2.3" fill="#2f7fc1"/><circle cx="361.38" cy="414.46" r="2.3" fill="#2f7fc1"/><circle cx="371.42" cy="414.21" r="2.3" fill="#2f7fc1"/><circle cx="381.46" cy="414.34" r="2.3" fill="#2f7fc1"/><circle cx="391.50" cy="414.21" r="2.3" fill="#2f7fc1"/><circle cx="401.54" cy="414.46" r="2.3" fill="#2f7fc1"/><circle cx="411.58" cy="414.21" r="2.3" fill="#2f7fc1"/><circle cx="421.62" cy="414.46" r="2.3" fill="#2f7fc1"/><circle cx="431.66" cy="414.46" r="2.3" fill="#2f7fc1"/><circle cx="441.70" cy="414.21" r="2.3" fill="#2f7fc1"/><circle cx="451.74" cy="414.46" r="2.3" fill="#2f7fc1"/><circle cx="461.78" cy="414.34" r="2.3" fill="#2f7fc1"/><circle cx="471.82" cy="414.46" r="2.3" fill="#2f7fc1"/><circle cx="481.86" cy="414.34" r="2.3" fill="#2f7fc1"/><circle cx="491.90" cy="414.34" r="2.3" fill="#2f7fc1"/><circle cx="501.94" cy="414.21" r="2.3" fill="#2f7fc1"/><circle cx="511.98" cy="414.21" r="2.3" fill="#2f7fc1"/><circle cx="522.02" cy="414.34" r="2.3" fill="#2f7fc1"/><circle cx="532.06" cy="414.21" r="2.3" fill="#2f7fc1"/><circle cx="542.10" cy="414.34" r="2.3" fill="#2f7fc1"/><circle cx="552.14" cy="414.34" r="2.3" fill="#2f7fc1"/><circle cx="562.18" cy="414.21" r="2.3" fill="#2f7fc1"/><circle cx="572.22" cy="414.21" r="2.3" fill="#2f7fc1"/><circle cx="582.26" cy="414.34" r="2.3" fill="#2f7fc1"/><circle cx="592.30" cy="414.46" r="2.3" fill="#2f7fc1"/><circle cx="602.34" cy="414.34" r="2.3" fill="#2f7fc1"/><circle cx="612.38" cy="414.46" r="2.3" fill="#2f7fc1"/><circle cx="622.42" cy="414.46" r="2.3" fill="#2f7fc1"/><circle cx="632.46" cy="414.46" r="2.3" fill="#2f7fc1"/><circle cx="642.50" cy="414.34" r="2.3" fill="#2f7fc1"/><circle cx="652.54" cy="414.46" r="2.3" fill="#2f7fc1"/><circle cx="662.58" cy="414.34" r="2.3" fill="#2f7fc1"/><circle cx="672.62" cy="414.21" r="2.3" fill="#2f7fc1"/><circle cx="682.66" cy="414.34" r="2.3" fill="#2f7fc1"/><circle cx="692.70" cy="414.21" r="2.3" fill="#2f7fc1"/><circle cx="702.74" cy="414.34" r="2.3" fill="#2f7fc1"/><circle cx="712.78" cy="414.34" r="2.3" fill="#2f7fc1"/><circle cx="722.82" cy="414.21" r="2.3" fill="#2f7fc1"/><circle cx="732.86" cy="414.34" r="2.3" fill="#2f7fc1"/><circle cx="742.90" cy="414.21" r="2.3" fill="#2f7fc1"/><circle cx="752.94" cy="414.34" r="2.3" fill="#2f7fc1"/><circle cx="762.98" cy="414.21" r="2.3" fill="#2f7fc1"/><circle cx="773.02" cy="414.21" r="2.3" fill="#2f7fc1"/><circle cx="783.06" cy="414.34" r="2.3" fill="#2f7fc1"/><circle cx="793.10" cy="414.21" r="2.3" fill="#2f7fc1"/><circle cx="803.14" cy="414.46" r="2.3" fill="#2f7fc1"/><circle cx="813.18" cy="414.34" r="2.3" fill="#2f7fc1"/><circle cx="823.22" cy="414.21" r="2.3" fill="#2f7fc1"/><circle cx="833.26" cy="414.46" r="2.3" fill="#2f7fc1"/><circle cx="843.30" cy="414.34" r="2.3" fill="#2f7fc1"/><circle cx="853.34" cy="414.21" r="2.3" fill="#2f7fc1"/><circle cx="863.38" cy="414.21" r="2.3" fill="#2f7fc1"/><circle cx="873.42" cy="414.21" r="2.3" fill="#2f7fc1"/><circle cx="883.46" cy="414.46" r="2.3" fill="#2f7fc1"/><circle cx="893.50" cy="414.21" r="2.3" fill="#2f7fc1"/><circle cx="903.54" cy="414.34" r="2.3" fill="#2f7fc1"/><circle cx="913.58" cy="414.21" r="2.3" fill="#2f7fc1"/><circle cx="923.62" cy="414.21" r="2.3" fill="#2f7fc1"/><circle cx="933.66" cy="414.21" r="2.3" fill="#2f7fc1"/><circle cx="943.70" cy="414.46" r="2.3" fill="#2f7fc1"/></svg>
</body></html>
